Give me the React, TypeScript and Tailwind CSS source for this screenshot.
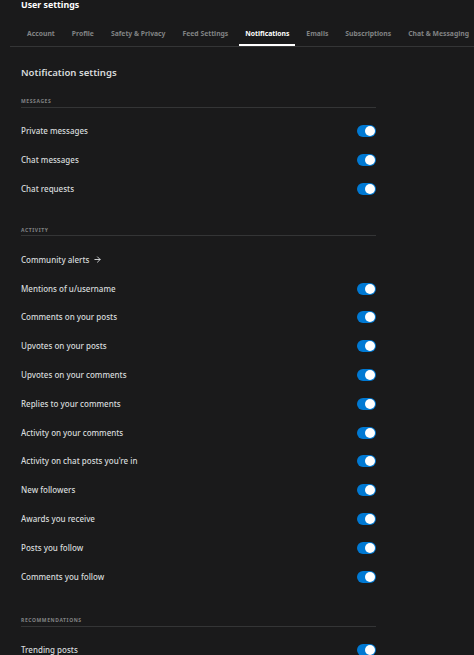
import { ArrowRight } from "lucide-react";

const TABS = ["Account", "Profile", "Safety & Privacy", "Feed Settings", "Notifications", "Emails", "Subscriptions", "Chat & Messaging"];

type Row = { label: string; link?: boolean };

const SECTIONS: { title: string; gap: string; rows: Row[] }[] = [
  {
    title: "Messages",
    gap: "mt-[17px]",
    rows: [{ label: "Private messages" }, { label: "Chat messages" }, { label: "Chat requests" }],
  },
  {
    title: "Activity",
    gap: "mt-[22px]",
    rows: [
      { label: "Community alerts", link: true },
      { label: "Mentions of u/username" },
      { label: "Comments on your posts" },
      { label: "Upvotes on your posts" },
      { label: "Upvotes on your comments" },
      { label: "Replies to your comments" },
      { label: "Activity on your comments" },
      { label: "Activity on chat posts you're in" },
      { label: "New followers" },
      { label: "Awards you receive" },
      { label: "Posts you follow" },
      { label: "Comments you follow" },
    ],
  },
  {
    title: "Recommendations",
    gap: "mt-[25px]",
    rows: [{ label: "Trending posts" }],
  },
];

function Toggle() {
  return (
    <div className="w-[19px] h-[12px] rounded-full bg-[#0079d3] flex items-center justify-end pr-[1px]">
      <div className="w-[10px] h-[10px] rounded-full bg-white" />
    </div>
  );
}

export default function App() {
  return (
    <main className="min-h-screen bg-[#1a1a1b] text-[#d7dadc] font-['Noto_Sans',sans-serif] overflow-hidden">
      <div className="h-[12px] px-[21px] flex items-center">
        <h1 className="text-[8.8px] font-bold text-white">User settings</h1>
      </div>

      <div className="ml-[10px] mt-[12px] pl-[11px] border-b border-[#343536] flex gap-[5px] whitespace-nowrap">
        {TABS.map(t => (
          <div key={t}
            className={["h-[22px] px-[6px] flex items-center text-[6.8px] font-bold border-b-2",
              t === "Notifications" ? "text-white border-white" : "text-[#818384] border-transparent"].join(" ")}>
            {t}
          </div>
        ))}
      </div>

      <div className="ml-[21px] w-[355px]">
        <h2 className="mt-[19px] h-[14px] flex items-center text-[9.6px] font-semibold text-[#d7dadc]">Notification settings</h2>

        {SECTIONS.map(s => (
          <section key={s.title} className={s.gap}>
            <div className="h-[11px] flex items-center border-b border-[#343536] text-[5px] font-bold uppercase tracking-[0.6px] text-[#818384]">
              {s.title}
            </div>
            <div className="mt-[9px]">
              {s.rows.map(r => (
                <div key={r.label} className="h-[28.8px] flex items-center justify-between">
                  <div className="flex items-center gap-[4px] text-[8px] font-medium">
                    {r.label}
                    {r.link && <ArrowRight size={9} strokeWidth={2.5} />}
                  </div>
                  {!r.link && <Toggle />}
                </div>
              ))}
            </div>
          </section>
        ))}
      </div>
    </main>
  );
}
